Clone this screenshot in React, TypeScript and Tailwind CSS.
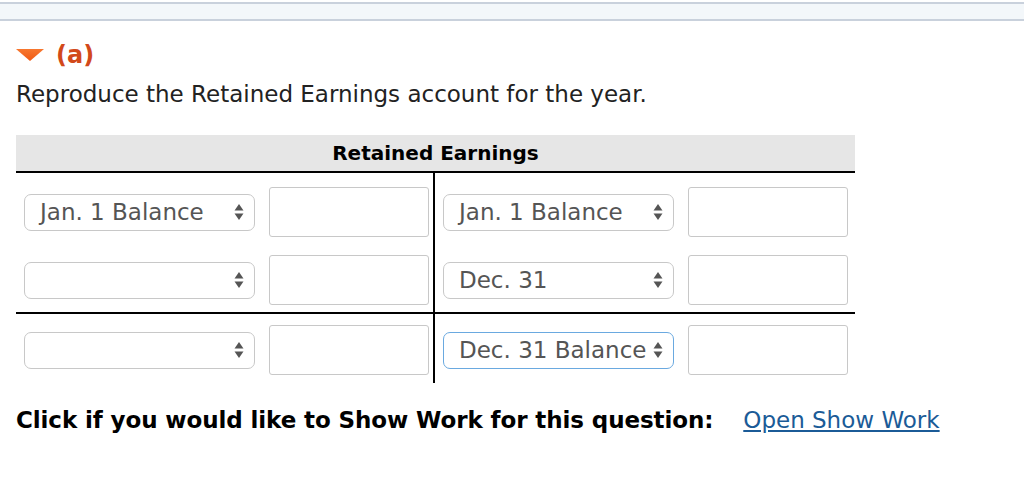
import type { FC } from 'react';

const font = { fontFamily: '"DejaVu Sans", Verdana, sans-serif' };

const Arrows: FC = () => (
    <svg width="10" height="18" viewBox="0 0 10 18" className="shrink-0">
        <path d="M5 1 L9.5 7.5 H0.5 Z" fill="#555" />
        <path d="M5 17 L9.5 10.5 H0.5 Z" fill="#555" />
    </svg>
);

const Select: FC<{ label?: string; focused?: boolean }> = ({ label, focused }) => (
    <div
        className={`flex h-[37px] w-[231px] items-center justify-between rounded-[7px] border bg-white pl-[15px] pr-[10px] text-[23px] text-[#555] ${
            focused ? 'border-[#6aa9e0]' : 'border-[#c8c8c8]'
        }`}
    >
        <span className="whitespace-nowrap leading-none">{label}</span>
        <Arrows />
    </div>
);

const Amount: FC = () => <div className="h-[50px] w-[160px] rounded-[3px] border border-[#c8c8c8] bg-white" />;

const Side: FC<{ label?: string; focused?: boolean }> = ({ label, focused }) => (
    <div className="flex items-center gap-[14px]">
        <Select label={label} focused={focused} />
        <Amount />
    </div>
);

export default function App() {
    return (
        <div className="h-[485px] w-[1024px] bg-white" style={font}>
            <div className="pt-[2px]">
                <div className="h-[19px] border-y-2 border-[#c9d1dc] bg-[#f3f7fa]" />
            </div>

            <div className="px-4">
                <div className="mt-[22px] flex items-center gap-[12px]">
                    <svg width="28" height="12" viewBox="0 0 28 12">
                        <defs>
                            <linearGradient id="tri" x1="0" y1="0" x2="0" y2="1">
                                <stop offset="0" stopColor="#f7772f" />
                                <stop offset="1" stopColor="#f05a14" />
                            </linearGradient>
                        </defs>
                        <path d="M0 0 H28 L14 12 Z" fill="url(#tri)" />
                    </svg>
                    <span className="text-[24px] font-bold leading-none text-[#d2491a]">(a)</span>
                </div>

                <p className="mt-[16px] text-[23px] leading-none text-[#222]">Reproduce the Retained Earnings account for the year.</p>

                <div className="mt-[29px] w-[839px]">
                    <div className="flex h-[38px] items-center justify-center border-b-2 border-black bg-[#e6e6e6] text-[20px] font-bold text-black">
                        Retained Earnings
                    </div>
                    <div className="grid grid-cols-[419px_420px]">
                        <div className="border-r-2 border-black">
                            <div className="flex flex-col gap-[18px] pt-[14px] pb-[7px] pl-[8px]">
                                <Side label="Jan. 1 Balance" />
                                <Side />
                            </div>
                        </div>
                        <div>
                            <div className="flex flex-col gap-[18px] pt-[14px] pb-[7px] pl-[8px]">
                                <Side label="Jan. 1 Balance" />
                                <Side label="Dec. 31" />
                            </div>
                        </div>
                        <div className="col-span-2 border-t-2 border-black" />
                        <div className="border-r-2 border-black pt-[11px] pb-[8px] pl-[8px]">
                            <Side />
                        </div>
                        <div className="pt-[11px] pb-[8px] pl-[8px]">
                            <Side label="Dec. 31 Balance" focused />
                        </div>
                    </div>
                </div>

                <div className="mt-[26px] flex items-center text-[23px] leading-none">
                    <span className="font-bold tracking-[-0.1px] text-black">Click if you would like to Show Work for this question:</span>
                    <a href="#" className="ml-[30px] text-[#1b5b97] underline">
                        Open Show Work
                    </a>
                </div>
            </div>
        </div>
    );
}
